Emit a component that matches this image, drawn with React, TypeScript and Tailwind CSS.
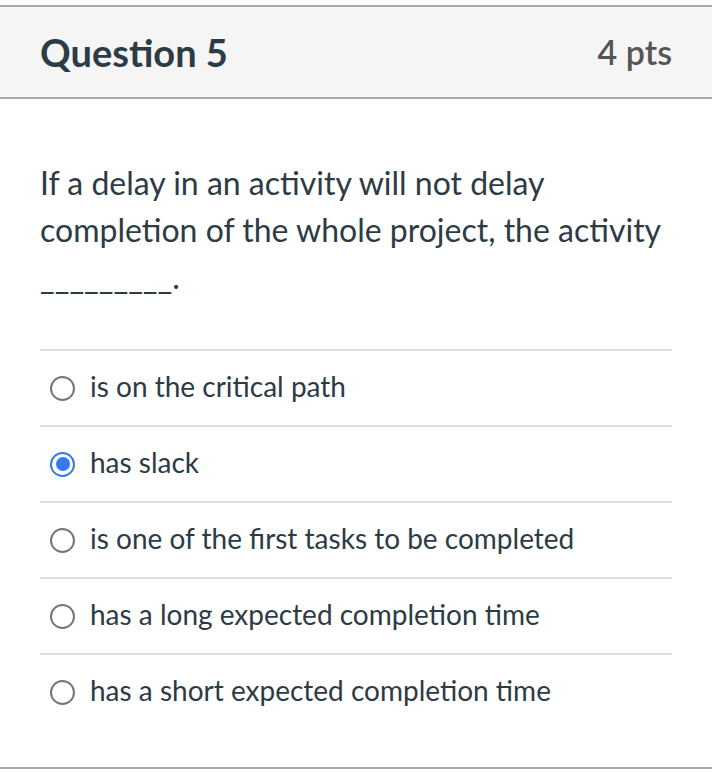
import React, { useState } from "react";

const answers = [
  "is on the critical path",
  "has slack",
  "is one of the first tasks to be completed",
  "has a long expected completion time",
  "has a short expected completion time",
];

const Radio = ({ checked }: { checked: boolean }) =>
  checked ? (
    <span className="flex h-[25px] w-[25px] shrink-0 items-center justify-center rounded-full border-[2.5px] border-[#3478f6] bg-white">
      <span className="h-[14px] w-[14px] rounded-full bg-[#3478f6]" />
    </span>
  ) : (
    <span className="h-[25px] w-[25px] shrink-0 rounded-full border-2 border-[#767676] bg-white" />
  );

export default function App() {
  const [selected, setSelected] = useState(1); // "has slack"

  return (
    <div
      className="min-h-[772px] w-[712px] bg-white pt-[5px] text-[#2d3b45]"
      style={{ fontFamily: "Lato, 'Liberation Sans', sans-serif" }}
    >
      <div className="flex h-[94px] items-center justify-between border-y-2 border-[#a8a8a8] bg-[#f5f5f5] px-[40px]">
        <h2 className="text-[38px] font-bold leading-none">Question 5</h2>
        <span className="text-[34px] font-semibold leading-none text-[#555555]">4 pts</span>
      </div>

      <div className="px-[40px] pt-[60px]">
        <p className="text-[32px] font-normal leading-[47px]">
          If a delay in an activity will not delay completion of the whole project, the activity
          <br />
          _________.
        </p>

        <div className="mt-[49px]">
          {answers.map((a, i) => (
            <label
              key={a}
              onClick={() => setSelected(i)}
              className="flex h-[76px] cursor-pointer items-center gap-[15px] border-t-2 border-[#dddddd] pl-[10px]"
            >
              <Radio checked={selected === i} />
              <span className="mb-[4px] text-[28px] font-normal leading-none">{a}</span>
            </label>
          ))}
        </div>
      </div>

      <div className="mt-[38px] border-b-2 border-[#a8a8a8]" />
    </div>
  );
}
